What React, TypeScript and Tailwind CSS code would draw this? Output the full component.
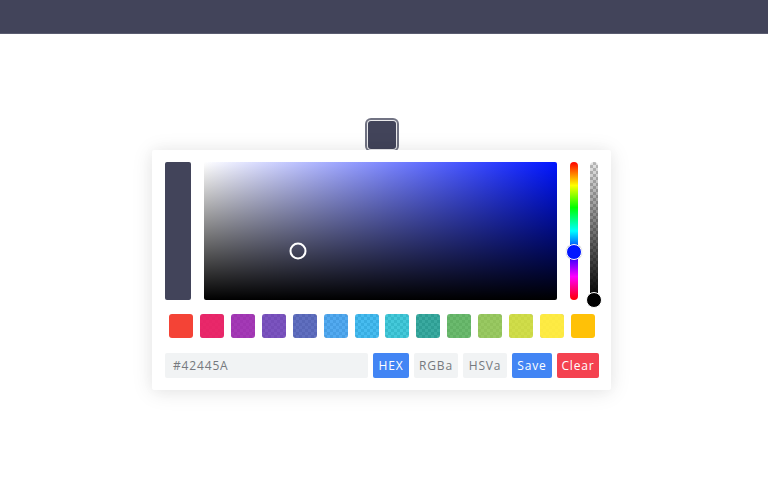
import React from "react";

const swatches = [
  "rgba(244, 67, 54, 1)",
  "rgba(233, 30, 99, 0.95)",
  "rgba(156, 39, 176, 0.9)",
  "rgba(103, 58, 183, 0.85)",
  "rgba(63, 81, 181, 0.8)",
  "rgba(33, 150, 243, 0.75)",
  "rgba(3, 169, 244, 0.7)",
  "rgba(0, 188, 212, 0.7)",
  "rgba(0, 150, 136, 0.75)",
  "rgba(76, 175, 80, 0.8)",
  "rgba(139, 195, 74, 0.85)",
  "rgba(205, 220, 57, 0.9)",
  "rgba(255, 235, 59, 0.95)",
  "rgba(255, 193, 7, 1)",
];

const checker =
  "bg-[repeating-conic-gradient(#b8b8b8_0%_25%,#e6e6e6_0%_50%)] bg-[length:6px_6px]";

export default function App() {
  return (
    <div
      className="min-h-[483px] bg-white"
      style={{ fontFamily: '"Open Sans", "Noto Sans", sans-serif' }}
    >
      <div className="h-[34px] bg-[#42445a] border-b border-[#5a5c70]" />
      <div className="flex flex-col items-center pr-[5px]">
        <button className="mt-[87px] w-7 h-7 rounded-[3px] bg-[#42445a] shadow-[0_0_0_1px_rgba(255,255,255,0.85),0_0_0_3px_rgba(66,68,90,0.75)]" />
        <div className="relative z-10 mt-px w-[459px] bg-white rounded-[2px] pt-3 pb-3 pl-[13px] pr-3 shadow-[0_2px_21px_0_rgba(0,0,0,0.1),0_0_14px_0_rgba(0,0,0,0.03)]">
          {/* selection */}
          <div className="flex h-[138px]">
            <div className="w-[26px] h-full rounded-[2px] bg-[#42445a]" />
            <div className="relative ml-[13px] w-[353px] h-full rounded-[2px] bg-[linear-gradient(to_top,#000,transparent),linear-gradient(to_left,#0015ff,#fff)]">
              <div className="absolute left-[26.7%] top-[64.7%] -translate-x-1/2 -translate-y-1/2 w-[17px] h-[17px] rounded-full border-2 border-white" />
            </div>
            <div className="relative ml-[13px] w-2 h-full rounded-full bg-[linear-gradient(to_bottom,red_0%,#ff0_17%,lime_33%,cyan_50%,blue_66%,#f0f_83%,red_100%)]">
              <div className="absolute left-1/2 top-[65%] -translate-x-1/2 -translate-y-1/2 w-4 h-4 rounded-full bg-[#0015ff] border border-white shadow-[0_0_1px_rgba(0,0,0,0.3)]" />
            </div>
            <div className={`relative ml-3 w-2 h-full rounded-full ${checker}`}>
              <div className="absolute inset-0 rounded-full bg-[linear-gradient(to_bottom,transparent,#000)]" />
              <div className="absolute left-1/2 top-full -translate-x-1/2 -translate-y-1/2 w-4 h-4 rounded-full bg-black border border-white" />
            </div>
          </div>
          {/* swatches */}
          <div className="mt-[14px] flex justify-between px-1">
            {swatches.map((c) => (
              <div key={c} className={`w-6 h-6 rounded-[3px] overflow-hidden ${checker}`}>
                <div className="w-full h-full" style={{ background: c }} />
              </div>
            ))}
          </div>
          {/* interaction */}
          <div className="mt-[15px] flex gap-[5px] h-[25px] text-[12px] tracking-[0.07em]">
            <div className="flex-1 flex items-center rounded-[2px] bg-[#f1f3f4] pl-2 text-[#75797e]">
              #42445A
            </div>
            <div className="w-9 flex items-center justify-center rounded-[2px] bg-[#4285f4] text-white">HEX</div>
            <div className="w-11 flex items-center justify-center rounded-[2px] bg-[#f1f3f4] text-[#75797e]">RGBa</div>
            <div className="w-11 flex items-center justify-center rounded-[2px] bg-[#f1f3f4] text-[#75797e]">HSVa</div>
            <div className="w-10 flex items-center justify-center rounded-[2px] bg-[#4285f4] text-white">Save</div>
            <div className="w-[42px] flex items-center justify-center rounded-[2px] bg-[#f44250] text-white">Clear</div>
          </div>
        </div>
      </div>
    </div>
  );
}
